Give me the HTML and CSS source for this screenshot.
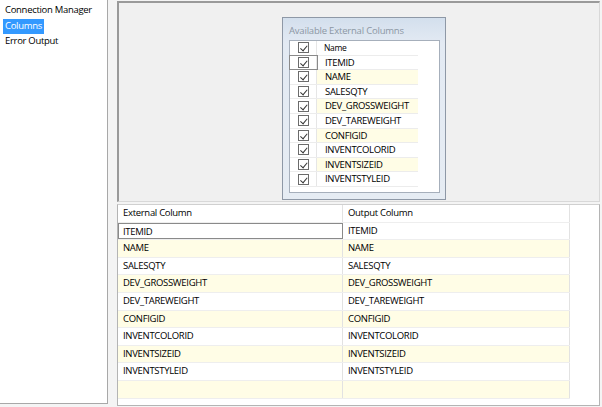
FILE: index.html
```html
<!DOCTYPE html>
<html>
<head>
<meta charset="utf-8">
<link rel="stylesheet" href="styles.css">
</head>
<body>
<div class="app">
  <nav class="sidebar">
    <div class="nav-item">Connection Manager</div>
    <div class="nav-item selected">Columns</div>
    <div class="nav-item">Error Output</div>
  </nav>
  <main class="main">
    <section class="top-panel">
      <div class="dialog">
        <div class="dialog-title">Available External Columns</div>
        <div class="list">
          <div class="list-table">
            <div class="lrow head"><div class="lcheck"><span class="cb"></span></div><div class="lname">Name</div></div>
            <div class="lrow"><div class="lcheck focus"><span class="cb"></span></div><div class="lname">ITEMID</div></div>
            <div class="lrow alt"><div class="lcheck"><span class="cb"></span></div><div class="lname">NAME</div></div>
            <div class="lrow"><div class="lcheck"><span class="cb"></span></div><div class="lname">SALESQTY</div></div>
            <div class="lrow alt"><div class="lcheck"><span class="cb"></span></div><div class="lname">DEV_GROSSWEIGHT</div></div>
            <div class="lrow"><div class="lcheck"><span class="cb"></span></div><div class="lname">DEV_TAREWEIGHT</div></div>
            <div class="lrow alt"><div class="lcheck"><span class="cb"></span></div><div class="lname">CONFIGID</div></div>
            <div class="lrow"><div class="lcheck"><span class="cb"></span></div><div class="lname">INVENTCOLORID</div></div>
            <div class="lrow alt"><div class="lcheck"><span class="cb"></span></div><div class="lname">INVENTSIZEID</div></div>
            <div class="lrow"><div class="lcheck"><span class="cb"></span></div><div class="lname">INVENTSTYLEID</div></div>
          </div>
        </div>
      </div>
    </section>
    <section class="grid">
      <div class="grow head"><div class="gc">External Column</div><div class="gc">Output Column</div></div>
      <div class="grow"><div class="gc focus">ITEMID</div><div class="gc">ITEMID</div></div>
      <div class="grow alt"><div class="gc">NAME</div><div class="gc">NAME</div></div>
      <div class="grow"><div class="gc">SALESQTY</div><div class="gc">SALESQTY</div></div>
      <div class="grow alt"><div class="gc">DEV_GROSSWEIGHT</div><div class="gc">DEV_GROSSWEIGHT</div></div>
      <div class="grow"><div class="gc">DEV_TAREWEIGHT</div><div class="gc">DEV_TAREWEIGHT</div></div>
      <div class="grow alt"><div class="gc">CONFIGID</div><div class="gc">CONFIGID</div></div>
      <div class="grow"><div class="gc">INVENTCOLORID</div><div class="gc">INVENTCOLORID</div></div>
      <div class="grow alt"><div class="gc">INVENTSIZEID</div><div class="gc">INVENTSIZEID</div></div>
      <div class="grow"><div class="gc">INVENTSTYLEID</div><div class="gc">INVENTSTYLEID</div></div>
      <div class="grow alt"><div class="gc"></div><div class="gc"></div></div>
    </section>
  </main>
</div>
</body>
</html>
```
FILE: styles.css
```css
* { box-sizing: border-box; }
html, body { margin: 0; padding: 0; }
body {
  width: 602px;
  height: 407px;
  background: #f4f4f4;
  font-family: "Open Sans", "Noto Sans", sans-serif;
  font-size: 9.5px;
  letter-spacing: -0.3px;
  color: #000;
  overflow: hidden;
}
.app {
  display: flex;
  height: 407px;
}
.sidebar {
  width: 108px;
  height: 404px;
  background: #fff;
  border-right: 1px solid #a8a8a8;
  border-bottom: 1px solid #a8a8a8;
  padding-top: 3px;
  padding-left: 3px;
  flex: none;
}
.nav-item {
  height: 15.5px;
  line-height: 14px;
  padding-left: 2px;
  display: table;
  color: #000;
}
.nav-item.selected {
  background: #3399ff;
  color: #fff;
  padding-right: 2px;
}
.main {
  flex: 1;
  display: flex;
  flex-direction: column;
  padding-left: 9px;
  padding-right: 2px;
  padding-top: 1px;
}
.top-panel {
  height: 201px;
  background: #f0f0f0;
  border-top: 2px solid #9a9a9a;
  border-left: 2px solid #9a9a9a;
  border-right: 1px solid #d8d8d8;
  border-bottom: 1px solid #d8d8d8;
  display: flex;
  justify-content: center;
  align-items: flex-start;
  padding-top: 14px;
  padding-left: 10px;
}
.dialog {
  width: 164px;
  height: 183px;
  border: 1px solid #8e98a6;
  background: linear-gradient(#d3dfed 0%, #e3eaf3 14%, #e6ecf3 100%);
  padding: 0 5px 6px 6px;
  display: flex;
  flex-direction: column;
}
.dialog-title {
  height: 22px;
  line-height: 26px;
  color: #8c97a4;
  font-size: 9.5px;
  letter-spacing: -0.2px;
  white-space: nowrap;
}
.list {
  flex: 1;
  background: #fff;
  border: 1px solid #a6afbb;
}
.list-table {
  width: 128px;
}
.lrow {
  display: flex;
  height: 14.6px;
  border-bottom: 1px solid #ececec;
}
.lrow.alt { background: #fffde6; }
.lrow.head { background: #fff; }
.lcheck {
  width: 27px;
  border-right: 1px solid #e6e6e6;
  display: flex;
  align-items: center;
  justify-content: center;
  background: #fff;
}
.lcheck.focus {
  outline: 1px solid #8a8a8a;
  outline-offset: 0;
}
.cb {
  width: 11px;
  height: 11px;
  border: 1px solid #6b6b6b;
  background: #fff;
  position: relative;
}
.cb::after {
  content: "";
  position: absolute;
  left: 3px;
  top: 1px;
  width: 3px;
  height: 5.5px;
  border-right: 1.2px solid #333;
  border-bottom: 1.2px solid #333;
  transform: rotate(40deg);
}
.lname {
  flex: 1;
  padding-left: 8px;
  line-height: 14px;
  white-space: nowrap;
}
.lrow.head .lname { font-size: 8.5px; padding-left: 7px; }
.grid {
  margin-top: 2px;
  height: 202px;
  background: #fff;
  border: 1px solid #b4b4b4;
  border-top-color: #d0d0d0;
}
.grow {
  display: flex;
  height: 17.6px;
  width: 452px;
  border-bottom: 1px solid #eeeeee;
}
.grow.alt { background: #fffde6; }
.grow.head { background: #fff; }
.gc {
  width: 225px;
  border-right: 1px solid #e2e2e2;
  padding-left: 5px;
  line-height: 16.5px;
  white-space: nowrap;
}
.gc + .gc { width: 227px; padding-left: 5px; }
.gc.focus {
  border: 1px solid #8a8a8a;
  padding-left: 4px;
  line-height: 15px;
}
```
